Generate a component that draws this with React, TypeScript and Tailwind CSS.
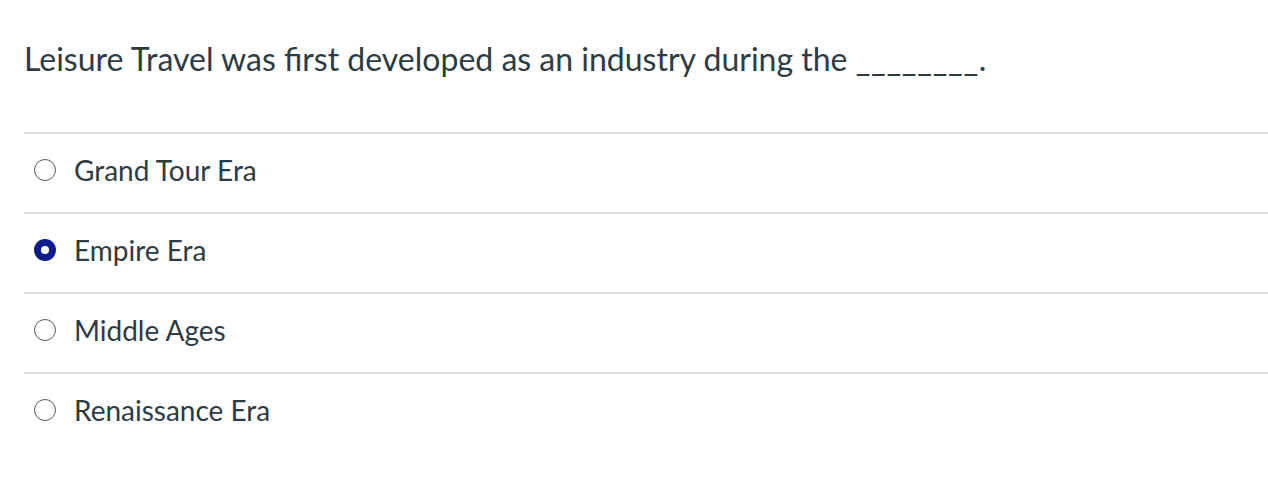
import React from "react";

const options = [
  { label: "Grand Tour Era", selected: false },
  { label: "Empire Era", selected: true },
  { label: "Middle Ages", selected: false },
  { label: "Renaissance Era", selected: false },
];

function Radio({ selected }: { selected: boolean }) {
  if (selected) {
    return (
      <span className="flex h-[22px] w-[22px] shrink-0 items-center justify-center rounded-full bg-[#0c1c8c]">
        <span className="h-[8px] w-[8px] rounded-full bg-white" />
      </span>
    );
  }
  return (
    <span className="h-[22px] w-[22px] shrink-0 rounded-full border-[1.5px] border-[#595959]" />
  );
}

export default function App() {
  return (
    <div
      className="min-h-[478px] w-[1268px] bg-white pl-[24px] text-[#2d3b45]"
      style={{ fontFamily: "Lato, 'Open Sans', sans-serif" }}
    >
      <div className="pt-[39px] pb-[53px] text-[32px] leading-[40px]">
        Leisure Travel was first developed as an industry during the{" "}
        <span className="tracking-[0.7px]">________</span>.
      </div>
      <div>
        {options.map((o) => (
          <div
            key={o.label}
            className="flex items-center gap-[18px] border-t-2 border-[#dddddd] pl-[10px] pt-[20px] pb-[26px]"
          >
            <Radio selected={o.selected} />
            <span className="text-[28px] leading-[32px]">{o.label}</span>
          </div>
        ))}
      </div>
    </div>
  );
}
